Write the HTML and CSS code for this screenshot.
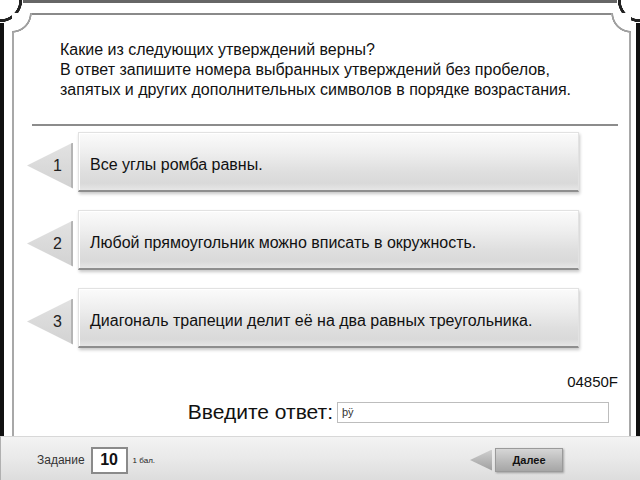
FILE: index.html
```html
<!DOCTYPE html>
<html lang="ru">
<head>
    <meta charset="UTF-8">
    <title>Задание 10</title>
    <link rel="stylesheet" href="styles.css">
</head>
<body>

<div class="frame">
    <div class="corner corner-tl"></div>
    <div class="corner corner-tr"></div>

    <div class="inner">
        <div class="inner-corner inner-tl"></div>
        <div class="inner-corner inner-tr"></div>

        <p class="question">
            Какие из следующих утверждений верны?<br>
            В ответ запишите номера выбранных утверждений без пробелов,<br>
            запятых и других дополнительных символов в порядке возрастания.
        </p>

        <hr class="separator">

        <div class="options">
            <div class="option">
                <div class="num">1</div>
                <div class="card">Все углы ромба равны.</div>
            </div>
            <div class="option">
                <div class="num">2</div>
                <div class="card">Любой прямоугольник можно вписать в окружность.</div>
            </div>
            <div class="option">
                <div class="num">3</div>
                <div class="card">Диагональ трапеции делит её на два равных треугольника.</div>
            </div>
        </div>

        <div class="code">04850F</div>

        <div class="answer">
            <label for="answer">Введите ответ:</label>
            <input type="text" id="answer" value="þÿ">
        </div>
    </div>
</div>

<div class="toolbar">
    <span class="task-label">Задание</span>
    <span class="task-num">10</span>
    <span class="score">1 бал.</span>

    <div class="nav">
        <span class="back"></span>
        <button type="button" class="next">Далее</button>
    </div>
</div>

</body>
</html>
```

FILE: styles.css
```css
body, p, hr, button, input, label {
    margin: 0;
    padding: 0;
    box-sizing: border-box;
}

body {
    width: 640px;
    height: 480px;
    overflow: hidden;
    background-color: #fff;
    font-family: "Liberation Sans", Arial, sans-serif;
    color: #111;
}

/* outer frame */
.frame {
    position: relative;
    height: 436px;
    box-sizing: border-box;
    border-left: 4px solid #111;
    border-right: 4px solid #111;
    border-top: 3px solid #666;
    padding: 10px 5px 0 8px;
    display: flex;
    flex-direction: column;
}

.corner {
    position: absolute;
    width: 23px;
    height: 23px;
}

.corner-tl {
    left: -4px;
    top: -3px;
    background: radial-gradient(circle at 0 0, #fff 19px, #222 19.5px, #222 22px, #fff 22.5px);
}

.corner-tr {
    right: -4px;
    top: -3px;
    background: radial-gradient(circle at 100% 0, #fff 19px, #222 19.5px, #222 22px, #fff 22.5px);
}

/* inner frame */
.inner {
    position: relative;
    flex: 1;
    border-top: 2px solid #8a8a8a;
    border-left: 2px solid #a8a8a8;
    border-right: 2px solid #a8a8a8;
}

.inner-corner {
    position: absolute;
    top: -2px;
    width: 20px;
    height: 20px;
}

.inner-tl {
    left: -2px;
    background: radial-gradient(circle at 0 0, #fff 17.5px, #a0a0a0 18px, #a0a0a0 19.5px, #fff 20px);
}

.inner-tr {
    right: -2px;
    background: radial-gradient(circle at 100% 0, #fff 17.5px, #a0a0a0 18px, #a0a0a0 19.5px, #fff 20px);
}

.question {
    padding: 25px 0 0 46px;
    font-size: 16px;
    line-height: 20px;
    color: #111;
}

.separator {
    margin: 24px 11px 0 18px;
    border: none;
    border-top: 2px solid #8c8c8c;
}

/* answer options */
.options {
    display: flex;
    flex-direction: column;
    gap: 18px;
    margin-top: 6px;
    padding-left: 13px;
}

.option {
    display: flex;
    align-items: center;
    gap: 5px;
}

.num {
    width: 46px;
    height: 46px;
    margin-top: 7px;
    padding-left: 26px;
    box-sizing: border-box;
    display: flex;
    align-items: center;
    font-size: 16px;
    color: #222;
    background: linear-gradient(to bottom, #e2e2e2, #d2d2d2);
    border-right: 2px solid #b4b4b4;
    clip-path: polygon(0 50%, 100% 0, 100% 100%);
}

.card {
    width: 501px;
    height: 60px;
    padding: 6px 0 0 11px;
    box-sizing: border-box;
    display: flex;
    align-items: center;
    font-size: 16px;
    color: #111;
    background: linear-gradient(to bottom, #fbfbfb 0%, #eeeeee 35%, #dedede 70%, #d9d9d9 88%, #e6e6e6 100%);
    border: 1px solid #e2e2e2;
    border-bottom: 2px solid #8e8e8e;
    box-shadow: 1px 2px 3px rgba(0, 0, 0, 0.22), inset 1px 1px 0 #fff;
}

.code {
    margin: 25px 11px 0 0;
    text-align: right;
    font-size: 15px;
    line-height: 18px;
    color: #111;
}

.answer {
    display: flex;
    align-items: center;
    justify-content: flex-end;
    margin-top: 8px;
    padding-right: 20px;
}

.answer label {
    font-size: 21px;
    line-height: 26px;
    color: #111;
}

.answer input {
    width: 272px;
    height: 21px;
    margin-left: 4px;
    padding: 0 4px;
    border: 1px solid #bdbdbd;
    font-family: "Liberation Sans", Arial, sans-serif;
    font-size: 11px;
    color: #333;
    background: #fff;
}

/* bottom bar */
.toolbar {
    height: 42px;
    display: flex;
    align-items: center;
    padding-left: 36px;
    padding-top: 2px;
    background: linear-gradient(to bottom, #f3f3f3, #e9e9e9 50%, #dcdcdc);
    border-top: 1px solid #d8d8d8;
    border-bottom: 1px solid #9a9a9a;
    border-left: 1px solid #b0b0b0;
}

.task-label {
    font-size: 12px;
    color: #333;
}

.task-num {
    width: 37px;
    height: 27px;
    margin-left: 6px;
    box-sizing: border-box;
    display: flex;
    align-items: center;
    justify-content: center;
    border: 2px solid #8a8a8a;
    background: #fff;
    font-weight: bold;
    font-size: 16px;
    color: #111;
}

.score {
    margin-left: 5px;
    font-size: 8px;
    color: #222;
}

.nav {
    margin-left: auto;
    margin-right: 77px;
    display: flex;
    align-items: center;
    gap: 3px;
}

.back {
    width: 22px;
    height: 21px;
    background: linear-gradient(to bottom, #cfcfcf, #9e9e9e);
    clip-path: polygon(0 50%, 100% 0, 100% 100%);
}

.next {
    width: 68px;
    height: 24px;
    border: 1px solid #9a9a9a;
    background: linear-gradient(to bottom, #d6d6d6, #b8b8b8 60%, #a6a6a6);
    font-family: "Liberation Sans", Arial, sans-serif;
    font-weight: bold;
    font-size: 11px;
    color: #111;
    box-shadow: 1px 1px 2px rgba(0, 0, 0, 0.3);
}
```
